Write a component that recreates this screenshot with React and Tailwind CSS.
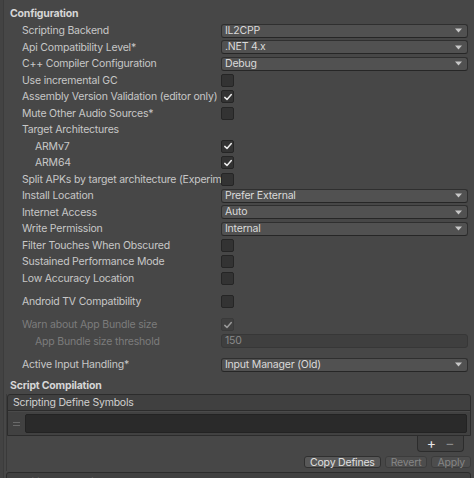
import React from "react";

const Arrow = () => (
  <svg width="7" height="5" viewBox="0 0 7 5" className="shrink-0">
    <path d="M0 0.5 L7 0.5 L3.5 4.5 Z" fill="#c8c8c8" />
  </svg>
);

const Check = ({ color = "#e8e8e8" }) => (
  <svg width="10" height="10" viewBox="0 0 10 10">
    <path d="M1.8 5.4 L4 7.5 L8.3 2.6" fill="none" stroke={color} strokeWidth="1.5" strokeLinecap="round" strokeLinejoin="round" />
  </svg>
);

const Dropdown = ({ value }) => (
  <div className="flex h-[14px] w-[247px] items-center justify-between rounded-[3px] border border-[#2f2f2f] border-b-[#262626] bg-[#515151] pl-[3px] pr-[5px] text-[#dadada]">
    <span className="leading-[12px]">{value}</span>
    <Arrow />
  </div>
);

const Box = ({ checked, disabled }) => (
  <div
    className={
      "flex h-[13px] w-[13px] items-center justify-center rounded-[2px] border " +
      (disabled ? "border-[#3a3a3a] bg-[#404040]" : "border-[#252525] bg-[#333333]")
    }
  >
    {checked ? <Check color={disabled ? "#9a9a9a" : "#ececec"} /> : null}
  </div>
);

const Row = ({ label, indent, children, disabled }) => (
  <div className="flex h-[16.5px] items-center">
    <div
      className={
        "w-[217px] shrink-0 overflow-hidden whitespace-nowrap leading-[15px] " +
        (indent ? "pl-[31px] " : "pl-[18px] ") +
        (disabled ? "text-[#7c7c7c]" : "text-[#c8c8c8]")
      }
    >
      {label}
    </div>
    <div className="flex items-center">{children}</div>
  </div>
);

export default function App() {
  return (
    <div
      className="relative flex h-[478px] w-[474px] overflow-hidden bg-[#474747] text-[10.5px] tracking-[-0.2px] text-[#c8c8c8]"
      style={{ fontFamily: "Inter, 'Noto Sans', sans-serif" }}
    >
      <div className="w-[4px] shrink-0 border-r border-[#3c3c3c] bg-[#434343]" />
      <div className="flex-1 pt-[6px]">
        <div className="flex h-[16.5px] items-center pl-[6px] font-bold text-[#d6d6d6]">Configuration</div>
        <Row label="Scripting Backend"><Dropdown value="IL2CPP" /></Row>
        <Row label="Api Compatibility Level*"><Dropdown value=".NET 4.x" /></Row>
        <Row label="C++ Compiler Configuration"><Dropdown value="Debug" /></Row>
        <Row label="Use incremental GC"><Box /></Row>
        <Row label="Assembly Version Validation (editor only)"><Box checked /></Row>
        <Row label="Mute Other Audio Sources*"><Box /></Row>
        <Row label="Target Architectures" />
        <Row label="ARMv7" indent><Box checked /></Row>
        <Row label="ARM64" indent><Box checked /></Row>
        <Row label="Split APKs by target architecture (Experimental)"><Box /></Row>
        <Row label="Install Location"><Dropdown value="Prefer External" /></Row>
        <Row label="Internet Access"><Dropdown value="Auto" /></Row>
        <Row label="Write Permission"><Dropdown value="Internal" /></Row>
        <Row label="Filter Touches When Obscured"><Box /></Row>
        <Row label="Sustained Performance Mode"><Box /></Row>
        <Row label="Low Accuracy Location"><Box /></Row>
        <div className="h-[7px]" />
        <Row label="Android TV Compatibility"><Box /></Row>
        <div className="h-[6.5px]" />
        <Row label="Warn about App Bundle size" disabled><Box checked disabled /></Row>
        <Row label="App Bundle size threshold" indent disabled>
          <div className="flex h-[14px] w-[247px] items-center rounded-[3px] border border-[#373737] bg-[#3f3f3f] pl-[3px] leading-[12px] text-[#8a8a8a]">150</div>
        </Row>
        <div className="h-[7px]" />
        <Row label="Active Input Handling*"><Dropdown value="Input Manager (Old)" /></Row>
        <div className="h-[4.75px]" />
        <div className="flex h-[16.5px] items-center pl-[6px] font-bold text-[#d6d6d6]">Script Compilation</div>
        <div className="ml-[2px] mr-[3px] border-l border-[#3a3a3a] pb-[3px]">
          <div className="rounded-t-[3px] border border-[#2c2c2c] bg-[#404040]">
            <div className="flex h-[16px] items-center border-b border-[#2c2c2c] pl-[5px] text-[#d0d0d0]">Scripting Define Symbols</div>
            <div className="flex h-[24px] items-center border-t border-[#4a4a4a] bg-[#414141] pr-[3px]">
              <div className="flex w-[17px] flex-col items-center gap-[2px]">
                <div className="h-[1px] w-[7px] bg-[#6a6a6a]" />
                <div className="h-[1px] w-[7px] bg-[#6a6a6a]" />
              </div>
              <div className="h-[19px] flex-1 rounded-[2px] border border-[#232323] bg-[#2a2a2a]" />
            </div>
          </div>
          <div className="flex justify-end pr-[7px]">
            <div className="flex h-[16px] w-[47px] items-center justify-around rounded-b-[4px] border border-t-0 border-[#2c2c2c] bg-[#414141] px-[4px] pb-[1px]">
              <span className="text-[14px] leading-[14px] text-[#e8e8e8]">+</span>
              <span className="text-[14px] leading-[14px] text-[#8a8a8a]">−</span>
            </div>
          </div>
          <div className="mt-[4px] flex justify-end gap-[4px] pr-[0px]">
            <div className="flex h-[12px] items-center rounded-[3px] border border-[#303030] bg-[#585858] px-[5px] leading-[11px] text-[#e0e0e0]">Copy Defines</div>
            <div className="flex h-[12px] items-center rounded-[3px] border border-[#3c3c3c] bg-[#4d4d4d] px-[5px] leading-[11px] text-[#858585]">Revert</div>
            <div className="flex h-[12px] items-center rounded-[3px] border border-[#3c3c3c] bg-[#4d4d4d] px-[5px] leading-[11px] text-[#858585]">Apply</div>
          </div>
        </div>
        <div className="ml-[2px] mr-[3px] mt-[1px] h-[20px] rounded-t-[3px] border border-[#2c2c2c] bg-[#404040] pl-[5px] pt-[2px] text-[#d0d0d0]">Additional Compiler Arguments</div>
      </div>
    </div>
  );
}
